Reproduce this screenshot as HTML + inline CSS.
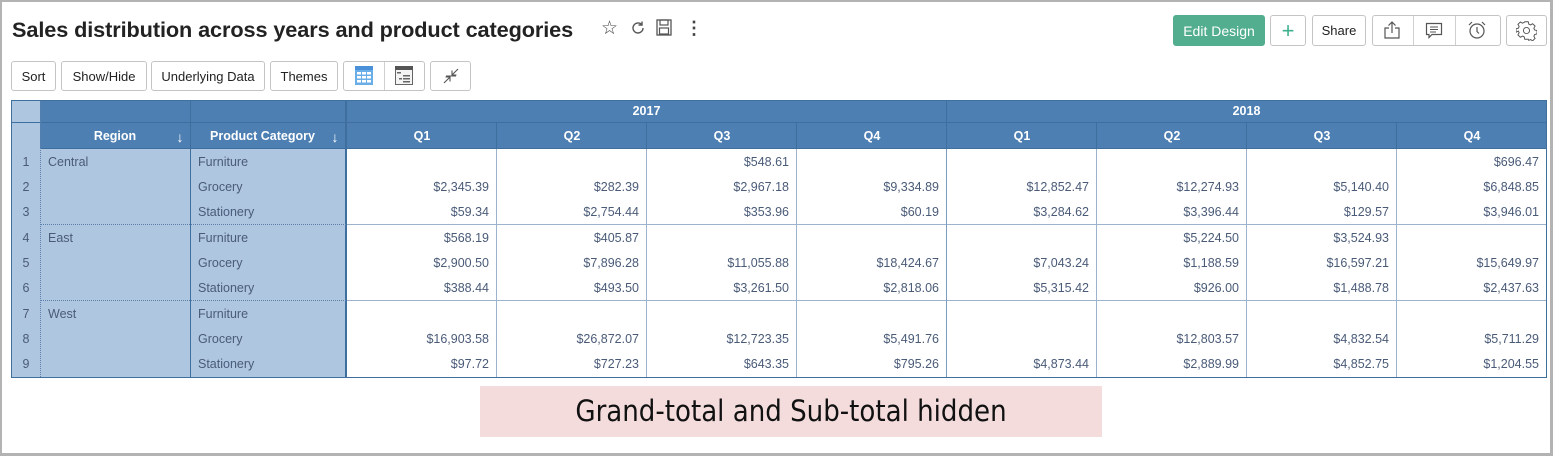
<!DOCTYPE html>
<html><head><meta charset="utf-8"><style>
*{box-sizing:border-box;margin:0;padding:0}
body{width:1553px;height:456px;background:#fff;font-family:"Liberation Sans",Arial,sans-serif;position:relative;overflow:hidden}
.frame{position:absolute;left:0;top:0;width:1553px;height:456px;border:2px solid #b3b3b3;border-right-width:3px;border-bottom-width:3px}
.abs{position:absolute}
.title{left:12px;top:17px;font-size:21.7px;font-weight:bold;color:#222;letter-spacing:-0.1px}
.btn{position:absolute;border:1px solid #c4c4c4;border-radius:3px;background:#fff;font-size:13px;color:#222;display:flex;align-items:center;justify-content:center}
.cell{position:absolute;font-size:12.5px;color:#4a5b78;height:25px;line-height:26px}
.hd{position:absolute;color:#fff;font-weight:bold;font-size:12.5px;text-align:center}
.vl{position:absolute;width:1px;background:#9db3cd}
</style></head><body>
<div class="frame"></div>
<div class="abs title">Sales distribution across years and product categories</div>
<div class="abs" style="left:601px;top:17px;font-size:19px;color:#444">☆</div>
<svg class="abs" style="left:630px;top:20px" width="16" height="16" viewBox="0 0 16 16"><path d="M13 8a5 5 0 1 1-1.5-3.6" fill="none" stroke="#555" stroke-width="1.4"/><path d="M12 1.5v3.5h-3.5" fill="none" stroke="#555" stroke-width="1.4"/></svg>
<svg class="abs" style="left:656px;top:19px" width="16" height="17" viewBox="0 0 16 17"><rect x="1" y="1" width="14" height="15" fill="none" stroke="#555" stroke-width="1.3"/><rect x="4" y="1" width="8" height="5" fill="none" stroke="#555" stroke-width="1.2"/><rect x="3.5" y="9" width="9" height="6" fill="none" stroke="#555" stroke-width="1.2"/></svg>
<div class="abs" style="left:685px;top:18px;font-size:18px;color:#444;font-weight:bold;line-height:20px">⋮</div>

<div class="btn" style="left:1173px;top:15px;width:92px;height:31px;background:#52ae8f;border-color:#52ae8f;color:#fff;font-size:14px">Edit Design</div>
<div class="btn" style="left:1270px;top:15px;width:36px;height:31px;color:#3fb08f;font-size:22px">+</div>
<div class="btn" style="left:1312px;top:15px;width:54px;height:31px">Share</div>
<div class="btn" style="left:1372px;top:15px;width:129px;height:31px"></div>
<div class="vl" style="left:1413px;top:16px;height:29px;background:#d0d0d0"></div>
<div class="vl" style="left:1455px;top:16px;height:29px;background:#d0d0d0"></div>
<svg class="abs" style="left:1383px;top:20px" width="18" height="20" viewBox="0 0 18 20"><path d="M6 8H2v10h14V8h-4M9 13V2M5.5 5.5L9 2l3.5 3.5" fill="none" stroke="#555" stroke-width="1.2"/></svg>
<svg class="abs" style="left:1425px;top:22px" width="18" height="18" viewBox="0 0 18 18"><path d="M1.5 1.5h15v11H7l-3 3v-3H1.5z" fill="none" stroke="#555" stroke-width="1.2"/><path d="M5 5h8M5 7.5h8M5 10h6" stroke="#555" stroke-width="1"/></svg>
<svg class="abs" style="left:1467px;top:20px" width="20" height="20" viewBox="0 0 20 20"><circle cx="10" cy="11" r="7" fill="none" stroke="#555" stroke-width="1.2"/><path d="M10 7v4.5l2 2M2 5l3-3M18 5l-3-3" fill="none" stroke="#555" stroke-width="1.2"/></svg>
<div class="btn" style="left:1506px;top:15px;width:41px;height:31px"></div>
<svg class="abs" style="left:1516px;top:20px" width="21" height="21" viewBox="0 0 24 24"><path d="M12 8.5a3.5 3.5 0 1 0 0 7a3.5 3.5 0 1 0 0-7zM10 2h4l.6 2.7 2 .9 2.4-1.4 2.8 2.8-1.4 2.4.9 2 2.7.6v4l-2.7.6-.9 2 1.4 2.4-2.8 2.8-2.4-1.4-2 .9L14 22h-4l-.6-2.7-2-.9-2.4 1.4-2.8-2.8 1.4-2.4-.9-2L0 14v-4l2.7-.6.9-2L2.2 5l2.8-2.8 2.4 1.4 2-.9z" fill="none" stroke="#555" stroke-width="1.1"/></svg>

<div class="btn" style="left:11px;top:61px;width:45px;height:30px">Sort</div>
<div class="btn" style="left:61px;top:61px;width:86px;height:30px">Show/Hide</div>
<div class="btn" style="left:151px;top:61px;width:114px;height:30px">Underlying Data</div>
<div class="btn" style="left:270px;top:61px;width:68px;height:30px">Themes</div>
<div class="btn" style="left:343px;top:61px;width:82px;height:30px"></div>
<div class="vl" style="left:384px;top:62px;height:28px;background:#d0d0d0"></div>
<svg class="abs" style="left:355px;top:66px" width="18" height="19" viewBox="0 0 18 19"><rect x="0" y="0" width="18" height="19" fill="#6aaee8"/><rect x="0" y="0" width="18" height="4" fill="#4a90d9"/><g fill="#fff"><rect x="2" y="6" width="4" height="2.5"/><rect x="7" y="6" width="4" height="2.5"/><rect x="12" y="6" width="4" height="2.5"/><rect x="2" y="10" width="4" height="2.5"/><rect x="7" y="10" width="4" height="2.5"/><rect x="12" y="10" width="4" height="2.5"/><rect x="2" y="14" width="4" height="2.5"/><rect x="7" y="14" width="4" height="2.5"/><rect x="12" y="14" width="4" height="2.5"/></g></svg>
<svg class="abs" style="left:395px;top:66px" width="18" height="19" viewBox="0 0 18 19"><rect x="0.5" y="0.5" width="17" height="18" fill="#f4f4f4" stroke="#666"/><rect x="0" y="0" width="18" height="4" fill="#555"/><g fill="#666"><rect x="2" y="6" width="4" height="1.5"/><rect x="8" y="9" width="7" height="1.5"/><rect x="4" y="12" width="3" height="1.5"/><rect x="8" y="12" width="7" height="1.5"/><rect x="8" y="15" width="7" height="1.5"/></g></svg>
<div class="btn" style="left:430px;top:61px;width:41px;height:30px"></div>
<svg class="abs" style="left:442px;top:67px" width="18" height="18" viewBox="0 0 18 18"><path d="M16 2L10 8M10 3.5V8h4.5M2 16l6-6M8 14.5V10H3.5M4 9h10" fill="none" stroke="#555" stroke-width="1.1"/></svg>

<div class="abs" style="left:11px;top:100px;width:1536px;height:278px;border:1px solid #3f6f9f;background:#fff"></div>
<div class="abs" style="left:12px;top:101px;width:1534px;height:48px;background:#4d7fb3"></div>
<div class="abs" style="left:12px;top:101px;width:28px;height:276px;background:#aec6e0"></div>
<div class="abs" style="left:40px;top:149px;width:306px;height:228px;background:#aec6e0"></div>
<div class="abs" style="left:12px;top:122px;width:1534px;height:1px;background:#3f6f9f"></div>
<div class="abs" style="left:40px;top:148px;width:1506px;height:1px;background:#3f6f9f"></div>
<div class="abs" style="left:40px;top:101px;width:1px;height:276px;border-left:1px dotted #5a7fa8"></div>
<div class="abs" style="left:190px;top:101px;width:1px;height:276px;background:#3f6f9f"></div>
<div class="abs" style="left:345px;top:101px;width:2px;height:276px;background:#3f6f9f"></div>
<div class="abs" style="left:946px;top:101px;width:1px;height:48px;background:#3f6f9f"></div>
<div class="abs" style="left:40px;top:224px;width:306px;height:1px;border-top:1px dotted #5a7fa8"></div>
<div class="abs" style="left:40px;top:300px;width:306px;height:1px;border-top:1px dotted #5a7fa8"></div>
<div class="abs" style="left:347px;top:224px;width:1199px;height:1px;background:#9db3cd"></div>
<div class="abs" style="left:347px;top:300px;width:1199px;height:1px;background:#9db3cd"></div>
<div class="hd" style="left:347px;top:101px;width:599px;line-height:21px">2017</div>
<div class="hd" style="left:947px;top:101px;width:599px;line-height:21px">2018</div>
<div class="hd" style="left:40px;top:123px;width:150px;line-height:26px">Region</div>
<div class="hd" style="left:170px;top:123px;width:20px;line-height:28px;font-size:14px">↓</div>
<div class="hd" style="left:190px;top:123px;width:145px;line-height:26px">Product Category</div>
<div class="hd" style="left:325px;top:123px;width:20px;line-height:28px;font-size:14px">↓</div>
<div id="t"></div>
<div class="abs" style="left:480px;top:386px;width:622px;height:51px;background:#f4dcdc;font-family:'DejaVu Sans Condensed','DejaVu Sans',sans-serif;font-stretch:condensed;font-size:29px;line-height:50px;text-align:center;color:#111">Grand-total and Sub-total hidden</div>
<script>
var d=[["Central","Furniture",["","","$548.61","","","","","$696.47"]],
["","Grocery",["$2,345.39","$282.39","$2,967.18","$9,334.89","$12,852.47","$12,274.93","$5,140.40","$6,848.85"]],
["","Stationery",["$59.34","$2,754.44","$353.96","$60.19","$3,284.62","$3,396.44","$129.57","$3,946.01"]],
["East","Furniture",["$568.19","$405.87","","","","$5,224.50","$3,524.93",""]],
["","Grocery",["$2,900.50","$7,896.28","$11,055.88","$18,424.67","$7,043.24","$1,188.59","$16,597.21","$15,649.97"]],
["","Stationery",["$388.44","$493.50","$3,261.50","$2,818.06","$5,315.42","$926.00","$1,488.78","$2,437.63"]],
["West","Furniture",["","","","","","","",""]],
["","Grocery",["$16,903.58","$26,872.07","$12,723.35","$5,491.76","","$12,803.57","$4,832.54","$5,711.29"]],
["","Stationery",["$97.72","$727.23","$643.35","$795.26","$4,873.44","$2,889.99","$4,852.75","$1,204.55"]]];
var h="",q=["Q1","Q2","Q3","Q4","Q1","Q2","Q3","Q4"];
for(var j=0;j<8;j++){var x=347+j*150;h+='<div class="hd" style="left:'+x+'px;top:123px;width:150px;line-height:26px">'+q[j]+'</div>';
if(j>0){h+='<div class="vl" style="left:'+(x-1)+'px;top:'+(j==4?101:123)+'px;height:26px;background:#3f6f9f"></div><div class="vl" style="left:'+(x-1)+'px;top:149px;height:228px;'+(j==4?'background:#7d9cc0':'')+'"></div>';}}
for(var i=0;i<9;i++){var y=149+i*25+(i>=3?1:0)+(i>=6?1:0);
h+='<div class="cell" style="left:12px;top:'+y+'px;width:28px;text-align:center">'+(i+1)+'</div>';
h+='<div class="cell" style="left:48px;top:'+y+'px">'+d[i][0]+'</div>';
h+='<div class="cell" style="left:198px;top:'+y+'px">'+d[i][1]+'</div>';
for(var j=0;j<8;j++)h+='<div class="cell" style="left:'+(347+j*150)+'px;top:'+y+'px;width:142px;text-align:right">'+d[i][2][j]+'</div>';}
document.getElementById("t").innerHTML=h;
</script>
</body></html>
